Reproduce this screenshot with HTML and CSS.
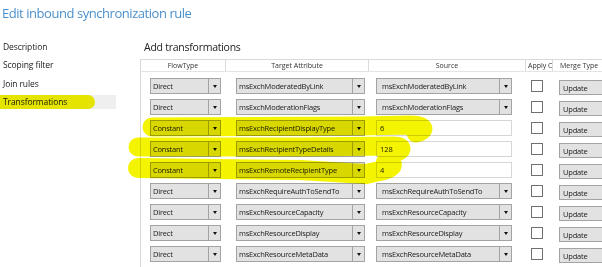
FILE: index.html
```html
<!DOCTYPE html>
<html>
<head>
<meta charset="utf-8">
<link rel="stylesheet" href="styles.css">
</head>
<body>
<div class="page">
  <h1 class="title">Edit inbound synchronization rule</h1>
  <div class="main">
    <nav class="nav">
      <div class="nav-item">Description</div>
      <div class="nav-item">Scoping filter</div>
      <div class="nav-item">Join rules</div>
      <div class="nav-item active">Transformations</div>
    </nav>
    <section class="content">
      <h2 class="heading">Add transformations</h2>
      <div class="table">
        <div class="thead">
          <div class="th">FlowType</div>
          <div class="th">Target Attribute</div>
          <div class="th">Source</div>
          <div class="th th-left">Apply Once</div>
          <div class="th th-left th-merge">Merge Type</div>
        </div>
        <div class="tbody">
          <div class="tr">
            <div class="td c1"><div class="combo"><span class="val">Direct</span><span class="btn"><i class="tri"></i></span></div></div>
            <div class="td c2"><div class="combo"><span class="val">msExchModeratedByLink</span><span class="btn"><i class="tri"></i></span></div></div>
            <div class="td c3"><div class="combo"><span class="val">msExchModeratedByLink</span><span class="btn"><i class="tri"></i></span></div></div>
            <div class="td c4"><span class="check"></span></div>
            <div class="td c5"><div class="combo merge"><span class="val">Update</span></div></div>
          </div>
          <div class="tr">
            <div class="td c1"><div class="combo"><span class="val">Direct</span><span class="btn"><i class="tri"></i></span></div></div>
            <div class="td c2"><div class="combo"><span class="val">msExchModerationFlags</span><span class="btn"><i class="tri"></i></span></div></div>
            <div class="td c3"><div class="combo"><span class="val">msExchModerationFlags</span><span class="btn"><i class="tri"></i></span></div></div>
            <div class="td c4"><span class="check"></span></div>
            <div class="td c5"><div class="combo merge"><span class="val">Update</span></div></div>
          </div>
          <div class="tr">
            <div class="td c1"><div class="combo"><span class="val">Constant</span><span class="btn"><i class="tri"></i></span></div></div>
            <div class="td c2"><div class="combo"><span class="val">msExchRecipientDisplayType</span><span class="btn"><i class="tri"></i></span></div></div>
            <div class="td c3"><div class="textbox">6</div></div>
            <div class="td c4"><span class="check"></span></div>
            <div class="td c5"><div class="combo merge"><span class="val">Update</span></div></div>
          </div>
          <div class="tr">
            <div class="td c1"><div class="combo"><span class="val">Constant</span><span class="btn"><i class="tri"></i></span></div></div>
            <div class="td c2"><div class="combo"><span class="val">msExchRecipientTypeDetails</span><span class="btn"><i class="tri"></i></span></div></div>
            <div class="td c3"><div class="textbox">128</div></div>
            <div class="td c4"><span class="check"></span></div>
            <div class="td c5"><div class="combo merge"><span class="val">Update</span></div></div>
          </div>
          <div class="tr">
            <div class="td c1"><div class="combo"><span class="val">Constant</span><span class="btn"><i class="tri"></i></span></div></div>
            <div class="td c2"><div class="combo"><span class="val">msExchRemoteRecipientType</span><span class="btn"><i class="tri"></i></span></div></div>
            <div class="td c3"><div class="textbox">4</div></div>
            <div class="td c4"><span class="check"></span></div>
            <div class="td c5"><div class="combo merge"><span class="val">Update</span></div></div>
          </div>
          <div class="tr">
            <div class="td c1"><div class="combo"><span class="val">Direct</span><span class="btn"><i class="tri"></i></span></div></div>
            <div class="td c2"><div class="combo"><span class="val">msExchRequireAuthToSendTo</span><span class="btn"><i class="tri"></i></span></div></div>
            <div class="td c3"><div class="combo"><span class="val">msExchRequireAuthToSendTo</span><span class="btn"><i class="tri"></i></span></div></div>
            <div class="td c4"><span class="check"></span></div>
            <div class="td c5"><div class="combo merge"><span class="val">Update</span></div></div>
          </div>
          <div class="tr">
            <div class="td c1"><div class="combo"><span class="val">Direct</span><span class="btn"><i class="tri"></i></span></div></div>
            <div class="td c2"><div class="combo"><span class="val">msExchResourceCapacity</span><span class="btn"><i class="tri"></i></span></div></div>
            <div class="td c3"><div class="combo"><span class="val">msExchResourceCapacity</span><span class="btn"><i class="tri"></i></span></div></div>
            <div class="td c4"><span class="check"></span></div>
            <div class="td c5"><div class="combo merge"><span class="val">Update</span></div></div>
          </div>
          <div class="tr">
            <div class="td c1"><div class="combo"><span class="val">Direct</span><span class="btn"><i class="tri"></i></span></div></div>
            <div class="td c2"><div class="combo"><span class="val">msExchResourceDisplay</span><span class="btn"><i class="tri"></i></span></div></div>
            <div class="td c3"><div class="combo"><span class="val">msExchResourceDisplay</span><span class="btn"><i class="tri"></i></span></div></div>
            <div class="td c4"><span class="check"></span></div>
            <div class="td c5"><div class="combo merge"><span class="val">Update</span></div></div>
          </div>
          <div class="tr">
            <div class="td c1"><div class="combo"><span class="val">Direct</span><span class="btn"><i class="tri"></i></span></div></div>
            <div class="td c2"><div class="combo"><span class="val">msExchResourceMetaData</span><span class="btn"><i class="tri"></i></span></div></div>
            <div class="td c3"><div class="combo"><span class="val">msExchResourceMetaData</span><span class="btn"><i class="tri"></i></span></div></div>
            <div class="td c4"><span class="check"></span></div>
            <div class="td c5"><div class="combo merge"><span class="val">Update</span></div></div>
          </div>
        </div>
      </div>
    </section>
  </div>
  <svg class="marker" width="602" height="267" viewBox="0 0 602 267" aria-hidden="true">
    <g fill="none" stroke="#f4f400" stroke-linecap="round" stroke-linejoin="round">
      <path d="M-4 102 L88 102" stroke-width="14"/>
      <path d="M152 127 L360 126 L410 125 C426 125 426 131 416 133" stroke-width="19"/>
      <path d="M138 147 L300 147 L393 146 C403 146 403 150 396 152" stroke-width="19"/>
      <path d="M138 168 L300 170 L366 174 L384 170 C394 166 394 164 386 162" stroke-width="20"/>
    </g>
  </svg>
</div>
</body>
</html>
```

FILE: styles.css
```css
html, body {
  margin: 0;
  padding: 0;
  background: #ffffff;
}

body {
  width: 602px;
  height: 267px;
  overflow: hidden;
  font-family: "Open Sans", "Noto Sans", sans-serif;
  color: #222222;
}

.page {
  position: relative;
  width: 602px;
  height: 267px;
  overflow: hidden;
}

.title {
  margin: 0;
  padding: 4px 0 0 2px;
  height: 34px;
  box-sizing: border-box;
  font-size: 13px;
  font-weight: 400;
  line-height: 18px;
  color: #4b90cc;
  letter-spacing: -0.45px;
}

.main {
  display: flex;
}

.nav {
  width: 116px;
  flex: none;
  padding-top: 6px;
}

.nav-item {
  height: 14px;
  line-height: 14px;
  margin-bottom: 4.3px;
  padding-left: 3px;
  font-size: 8.5px;
  letter-spacing: -0.1px;
  color: #222222;
  white-space: nowrap;
}

.nav-item.active {
  background: #efefef;
}

.content {
  flex: 1;
  padding-left: 24px;
  min-width: 0;
}

.heading {
  margin: 0;
  padding: 6px 0 0 4px;
  height: 25px;
  box-sizing: border-box;
  font-size: 10.5px;
  font-weight: 400;
  line-height: 14px;
  letter-spacing: -0.25px;
  color: #222222;
}

.table {
  width: 520px;
}

.thead,
.tr {
  display: grid;
  grid-template-columns: 85px 143px 157px 27px 108px;
}

.thead {
  height: 13px;
  border-top: 1px solid #dadada;
  border-bottom: 1px solid #e4e4e4;
  border-left: 1px solid #dadada;
  box-sizing: border-box;
}

.th {
  border-right: 1px solid #dadada;
  font-size: 7px;
  line-height: 11px;
  text-align: center;
  color: #333333;
  white-space: nowrap;
  overflow: hidden;
}

.th-left {
  text-align: left;
  padding-left: 2px;
}

.th-merge {
  padding-left: 7px;
}

.tbody {
  border-left: 1px solid #dadada;
  padding-top: 6px;
  height: 200px;
}

.tr {
  height: 21px;
}

.td {
  display: flex;
  align-items: flex-start;
}

.c1 { padding-left: 9px; }
.c1 .combo { width: 71px; }
.c2 { padding-left: 10px; }
.c2 .combo { width: 129px; }
.c3 { padding-left: 7px; }
.c3 .combo,
.c3 .textbox { width: 136px; }
.c4 { padding-left: 5px; }
.c5 { padding-left: 6px; }

.combo {
  display: flex;
  height: 16px;
  box-sizing: border-box;
  border: 1px solid #a3a3a3;
  background: #e2e2e2;
  font-size: 7.5px;
  letter-spacing: -0.2px;
  line-height: 14px;
  color: #1a1a1a;
  white-space: nowrap;
}

.combo .val {
  flex: 1;
  padding-left: 2px;
  overflow: hidden;
}

.c3 .combo .val {
  padding-left: 5px;
}

.combo .btn {
  width: 11px;
  flex: none;
  border-left: 1px solid #a3a3a3;
  display: flex;
  align-items: center;
  justify-content: center;
}

.tri {
  display: block;
  width: 0;
  height: 0;
  border-left: 2.5px solid transparent;
  border-right: 2.5px solid transparent;
  border-top: 3px solid #111111;
}

.combo.merge {
  width: 90px;
  margin-top: 2px;
  height: 15px;
}

.combo.merge .val {
  padding-left: 3px;
}

.textbox {
  height: 16px;
  box-sizing: border-box;
  border: 1px solid #d6d6d6;
  background: #ffffff;
  padding-left: 3px;
  font-size: 7.5px;
  line-height: 14px;
  color: #1a1a1a;
}

.check {
  display: block;
  width: 12px;
  height: 12px;
  margin-top: 2px;
  box-sizing: border-box;
  border: 1px solid #707070;
  background: #ffffff;
}

.marker {
  position: absolute;
  left: 0;
  top: 0;
  pointer-events: none;
  mix-blend-mode: multiply;
}
```
